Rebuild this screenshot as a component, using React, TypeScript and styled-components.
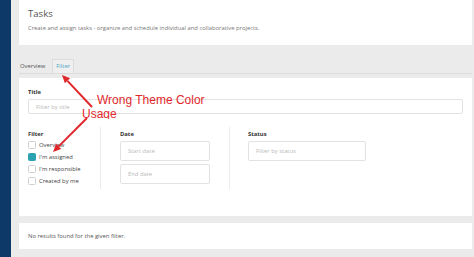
import React from "react";
import styled, { createGlobalStyle } from "styled-components";

const Global = createGlobalStyle`
  html, body { margin: 0; padding: 0; }
  body { width: 474px; height: 257px; overflow: hidden; font-family: "Open Sans", "Liberation Sans", sans-serif; }
  * { box-sizing: border-box; }
`;

const Page = styled.div`
  position: relative;
  display: flex;
  width: 474px;
  height: 257px;
  overflow: hidden;
`;

const Sidebar = styled.div`
  width: 11px;
  flex: none;
  background: #0c3967;
`;

const Main = styled.div`
  flex: 1;
  background: #ebebeb;
  padding: 0 2px 0 8px;
  display: flex;
  flex-direction: column;
`;

const HeaderCard = styled.div`
  height: 45px;
  background: #fff;
  padding: 8px 9px 0;
`;

const Title = styled.div`
  font-size: 9.6px;
  line-height: 12px;
  color: #555;
  font-weight: 400;
`;

const Subtitle = styled.div`
  margin-top: 4px;
  font-size: 5.85px;
  line-height: 8px;
  color: #777;
`;

const Tabs = styled.div`
  height: 29px;
  display: flex;
  align-items: flex-end;
  border-bottom: 1px solid #dcdcdc;
  gap: 3px;
`;

const Tab = styled.div<{ $active?: boolean }>`
  height: 14px;
  padding: 0 3px;
  font-size: 5.85px;
  line-height: 12px;
  color: ${(p) => (p.$active ? "#4aa6c2" : "#555")};
  border: 1px solid ${(p) => (p.$active ? "#dcdcdc" : "transparent")};
  border-bottom: none;
  background: ${(p) => (p.$active ? "#efefef" : "transparent")};
  &:first-child { padding-left: 0; }
`;

const FilterCard = styled.div`
  margin-top: 4px;
  height: 138px;
  background: #fff;
  padding: 9px;
`;

const Label = styled.div`
  font-size: 5.85px;
  line-height: 10px;
  font-weight: 700;
  color: #333;
`;

const Input = styled.div<{ $w?: number; $h?: number }>`
  width: ${(p) => (p.$w ? `${p.$w}px` : "100%")};
  height: ${(p) => p.$h ?? 20}px;
  border: 1px solid #e2e2e2;
  border-radius: 2px;
  padding: 0 7px;
  display: flex;
  align-items: center;
  font-size: 5.85px;
  color: #b9b9b9;
`;

const Columns = styled.div`
  margin-top: 13px;
  display: flex;
`;

const Column = styled.div<{ $w?: number; $pl?: number; $divider?: boolean }>`
  width: ${(p) => (p.$w ? `${p.$w}px` : "auto")};
  flex: ${(p) => (p.$w ? "none" : "1")};
  padding-left: ${(p) => p.$pl ?? 0}px;
  padding-top: 2px;
  min-height: 62px;
  border-right: ${(p) => (p.$divider ? "1px solid #ececec" : "none")};
  display: flex;
  flex-direction: column;
`;

const Stack = styled.div`
  margin-top: 2px;
  display: flex;
  flex-direction: column;
  gap: 3px;
`;

const CheckRow = styled.div`
  height: 12px;
  display: flex;
  align-items: center;
  gap: 3px;
  font-size: 5.85px;
  color: #444;
`;

const Box = styled.span<{ $on?: boolean }>`
  width: 8px;
  height: 8px;
  border-radius: 1.5px;
  border: 1px solid ${(p) => (p.$on ? "#2aa2b1" : "#cfcfcf")};
  background: ${(p) => (p.$on ? "#2aa2b1" : "#fff")};
`;

const ResultCard = styled.div`
  margin-top: 7px;
  height: 26px;
  background: #fff;
  padding: 0 9px;
  display: flex;
  align-items: center;
  font-size: 5.85px;
  color: #555;
`;

const Annotation = styled.div`
  position: absolute;
  left: 82px;
  top: 93px;
  height: 26px;
  overflow: hidden;
  font-family: "Liberation Sans", Arial, sans-serif;
  font-size: 12px;
  line-height: 14px;
  color: #e0282c;
  pointer-events: none;
`;

const AnnoLine = styled.div<{ $indent?: number }>`
  padding-left: ${(p) => p.$indent ?? 0}px;
  white-space: nowrap;
`;

const Arrows = styled.svg`
  position: absolute;
  left: 0;
  top: 0;
  pointer-events: none;
`;

function Arrow({ x1, y1, x2, y2 }: { x1: number; y1: number; x2: number; y2: number }) {
  const ang = Math.atan2(y2 - y1, x2 - x1);
  const len = 8;
  const w = 3.6;
  const bx = x2 - Math.cos(ang) * len;
  const by = y2 - Math.sin(ang) * len;
  const px = -Math.sin(ang) * w;
  const py = Math.cos(ang) * w;
  return (
    <g>
      <line x1={x1} y1={y1} x2={bx} y2={by} stroke="#e0282c" strokeWidth={2} />
      <polygon points={`${x2},${y2} ${bx + px},${by + py} ${bx - px},${by - py}`} fill="#e0282c" />
    </g>
  );
}

export default function App() {
  return (
    <Page>
      <Global />
      <Sidebar />
      <Main>
        <HeaderCard>
          <Title>Tasks</Title>
          <Subtitle>Create and assign tasks - organize and schedule individual and collaborative projects.</Subtitle>
        </HeaderCard>
        <Tabs>
          <Tab>Overview</Tab>
          <Tab $active>Filter</Tab>
        </Tabs>
        <FilterCard>
          <Label>Title</Label>
          <Input $h={15} style={{ marginTop: 2 }}>Filter by title</Input>
          <Columns>
            <Column $w={73} $divider>
              <Label>Filter</Label>
              <CheckRow><Box />Overview</CheckRow>
              <CheckRow><Box $on />I'm assigned</CheckRow>
              <CheckRow><Box />I'm responsible</CheckRow>
              <CheckRow><Box />Created by me</CheckRow>
            </Column>
            <Column $w={129} $pl={19} $divider>
              <Label>Date</Label>
              <Stack>
                <Input $w={90}>Start date</Input>
                <Input $w={90}>End date</Input>
              </Stack>
            </Column>
            <Column $pl={18}>
              <Label>Status</Label>
              <Stack>
                <Input $w={118}>Filter by status</Input>
              </Stack>
            </Column>
          </Columns>
        </FilterCard>
        <ResultCard>No results found for the given filter.</ResultCard>
      </Main>
      <Annotation>
        <AnnoLine $indent={15}>Wrong Theme Color</AnnoLine>
        <AnnoLine>Usage</AnnoLine>
      </Annotation>
      <Arrows width={474} height={257}>
        <Arrow x1={92} y1={107} x2={62} y2={75} />
        <Arrow x1={87} y1={118} x2={53} y2={152} />
      </Arrows>
    </Page>
  );
}
